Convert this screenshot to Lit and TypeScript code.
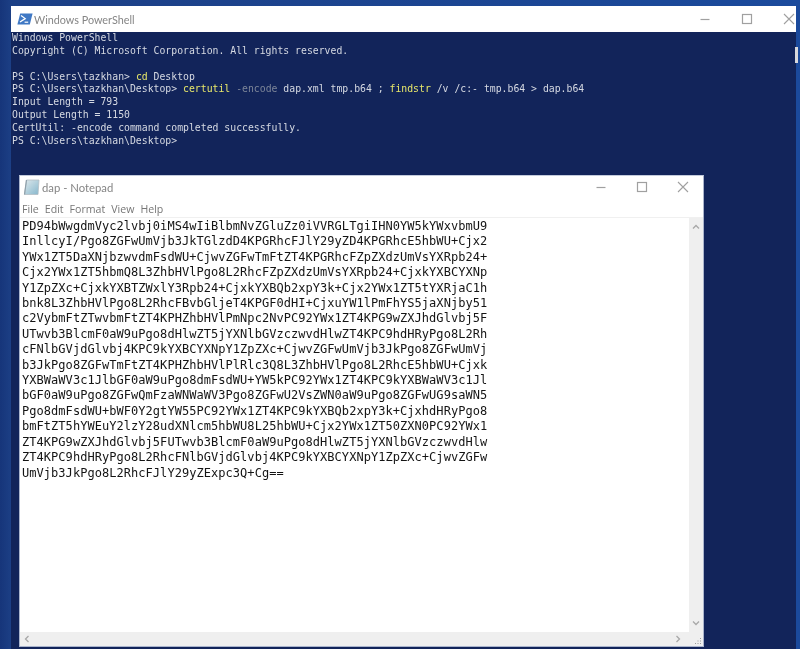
import { LitElement, html, css, svg } from "lit";
import { customElement } from "lit/decorators.js";

const CONSOLE: { text: string; parts?: [string, string][] }[] = [
  { text: "Windows PowerShell" },
  { text: "Copyright (C) Microsoft Corporation. All rights reserved." },
  { text: "" },
  { text: "", parts: [["", "PS C:\\Users\\tazkhan> "], ["y", "cd"], ["", " Desktop"]] },
  {
    text: "",
    parts: [
      ["", "PS C:\\Users\\tazkhan\\Desktop> "],
      ["y", "certutil"],
      ["", " "],
      ["g", "-encode"],
      ["", " dap.xml tmp.b64 ; "],
      ["y", "findstr"],
      ["", " /v /c:- tmp.b64 > dap.b64"],
    ],
  },
  { text: "Input Length = 793" },
  { text: "Output Length = 1150" },
  { text: "CertUtil: -encode command completed successfully." },
  { text: "PS C:\\Users\\tazkhan\\Desktop>" },
];

const B64 = [
  "PD94bWwgdmVyc2lvbj0iMS4wIiBlbmNvZGluZz0iVVRGLTgiIHN0YW5kYWxvbmU9",
  "InllcyI/Pgo8ZGFwUmVjb3JkTGlzdD4KPGRhcFJlY29yZD4KPGRhcE5hbWU+Cjx2",
  "YWx1ZT5DaXNjbzwvdmFsdWU+CjwvZGFwTmFtZT4KPGRhcFZpZXdzUmVsYXRpb24+",
  "Cjx2YWx1ZT5hbmQ8L3ZhbHVlPgo8L2RhcFZpZXdzUmVsYXRpb24+CjxkYXBCYXNp",
  "Y1ZpZXc+CjxkYXBTZWxlY3Rpb24+CjxkYXBQb2xpY3k+Cjx2YWx1ZT5tYXRjaC1h",
  "bnk8L3ZhbHVlPgo8L2RhcFBvbGljeT4KPGF0dHI+CjxuYW1lPmFhYS5jaXNjby51",
  "c2VybmFtZTwvbmFtZT4KPHZhbHVlPmNpc2NvPC92YWx1ZT4KPG9wZXJhdGlvbj5F",
  "UTwvb3BlcmF0aW9uPgo8dHlwZT5jYXNlbGVzczwvdHlwZT4KPC9hdHRyPgo8L2Rh",
  "cFNlbGVjdGlvbj4KPC9kYXBCYXNpY1ZpZXc+CjwvZGFwUmVjb3JkPgo8ZGFwUmVj",
  "b3JkPgo8ZGFwTmFtZT4KPHZhbHVlPlRlc3Q8L3ZhbHVlPgo8L2RhcE5hbWU+Cjxk",
  "YXBWaWV3c1JlbGF0aW9uPgo8dmFsdWU+YW5kPC92YWx1ZT4KPC9kYXBWaWV3c1Jl",
  "bGF0aW9uPgo8ZGFwQmFzaWNWaWV3Pgo8ZGFwU2VsZWN0aW9uPgo8ZGFwUG9saWN5",
  "Pgo8dmFsdWU+bWF0Y2gtYW55PC92YWx1ZT4KPC9kYXBQb2xpY3k+CjxhdHRyPgo8",
  "bmFtZT5hYWEuY2lzY28udXNlcm5hbWU8L25hbWU+Cjx2YWx1ZT50ZXN0PC92YWx1",
  "ZT4KPG9wZXJhdGlvbj5FUTwvb3BlcmF0aW9uPgo8dHlwZT5jYXNlbGVzczwvdHlw",
  "ZT4KPC9hdHRyPgo8L2RhcFNlbGVjdGlvbj4KPC9kYXBCYXNpY1ZpZXc+CjwvZGFw",
  "UmVjb3JkPgo8L2RhcFJlY29yZExpc3Q+Cg==",
];

const caption = () => html`
  <div class="caps">
    <svg width="14" height="14" viewBox="0 0 14 14"><path d="M2.500 7.500h9" stroke="#a0a0a0" stroke-width="1.200" fill="none" /></svg>
    <svg width="14" height="14" viewBox="0 0 14 14"><rect x="2.500" y="2.500" width="9" height="9" stroke="#a0a0a0" stroke-width="1.200" fill="none" /></svg>
    <svg width="14" height="14" viewBox="0 0 14 14"><path d="M2 2l10 10M12 2L2 12" stroke="#a0a0a0" stroke-width="1.100" fill="none" /></svg>
  </div>
`;

@customElement("app-root")
export class AppRoot extends LitElement {
  static styles = css`
    :host {
      display: block;
      width: 800px;
      height: 649px;
      overflow: hidden;
    }
    .desktop {
      position: relative;
      width: 800px;
      height: 649px;
      overflow: hidden;
      background: linear-gradient(90deg, #16357a 0, #1c3f85 11px, #1b4a9c 100%);
      filter: blur(0.45px);
    }
    .ps {
      position: absolute;
      left: 11px;
      top: 6px;
      width: 785px;
      height: 643px;
      display: flex;
      flex-direction: column;
      background: #12245a;
    }
    .title {
      display: flex;
      align-items: center;
      box-sizing: border-box;
      background: #fff;
      color: #858585;
      font-family: Lato, "Open Sans", sans-serif;
    }
    .ps .title {
      height: 26px;
      flex: none;
      padding-left: 6px;
      gap: 1px;
      font-size: 10.800px;
    }
    .caps {
      margin-left: auto;
      display: flex;
    }
    .ps .caps {
      gap: 28px;
      padding-right: 0;
    }
    .console {
      flex: 1;
      margin: 0;
      padding: 0 0 0 1px;
      color: #d5d9e2;
      font-family: "DejaVu Sans Mono", monospace;
      font-size: 9.800px;
      line-height: 12.850px;
      white-space: pre;
    }
    .y {
      color: #e8e86a;
    }
    .g {
      color: #7d8699;
    }
    .thumb {
      position: absolute;
      right: -2px;
      top: 41px;
      width: 3px;
      height: 16px;
      background: #d8d8dc;
    }
    .np {
      position: absolute;
      left: 19px;
      top: 175px;
      width: 685px;
      height: 472px;
      box-sizing: border-box;
      display: flex;
      flex-direction: column;
      background: #fff;
      border: 1px solid #aab4cc;
      border-top-color: #c3cbdc;
    }
    .np .title {
      height: 24px;
      flex: none;
      padding-left: 3px;
      padding-bottom: 2px;
      gap: 1px;
      font-size: 11.300px;
    }
    .np .caps {
      gap: 27px;
      padding-right: 13px;
    }
    .menu {
      display: flex;
      flex: none;
      height: 17px;
      align-items: center;
      padding-left: 2px;
      gap: 6px;
      color: #767676;
      font-family: "Open Sans", "Noto Sans", sans-serif;
      font-size: 10.600px;
      border-bottom: 1px solid #f0f0f0;
    }
    .mid {
      flex: 1;
      display: flex;
      min-height: 0;
    }
    .text {
      flex: 1;
      margin: 0;
      padding: 1px 0 0 2px;
      color: #141414;
      font-family: "DejaVu Sans Mono", monospace;
      font-size: 12px;
      letter-spacing: 0.045px;
      line-height: 15.400px;
      white-space: pre;
      overflow: hidden;
    }
    .vbar {
      width: 14px;
      flex: none;
      background: #efefef;
      display: flex;
      flex-direction: column;
      justify-content: space-between;
      align-items: center;
      padding: 5px 0;
      box-sizing: border-box;
    }
    .hbar {
      height: 14px;
      flex: none;
      background: #efefef;
      display: flex;
      align-items: center;
      justify-content: space-between;
      padding: 0 3px;
    }
    .hbar svg:nth-child(2) {
      margin-right: 18px;
    }
    .hbar .grip {
      position: absolute;
      right: 1px;
      bottom: 1px;
    }
  `;

  private chev(d: string) {
    return html`<svg width="8" height="8" viewBox="0 0 8 8"><path d=${d} stroke="#a8a8a8" stroke-width="1.300" fill="none" /></svg>`;
  }

  render() {
    return html`
      <div class="desktop">
        <section class="ps">
          <header class="title">
            <svg width="16" height="14" viewBox="0 0 16 14">
              <path d="M3.200 1.500H15.600L12.800 12.500H.4z" fill="#3f78c4" />
              <path d="M4 3.400l4.200 3.200L3 10" stroke="#fff" stroke-width="1.300" fill="none" />
              <path d="M7.600 10.200h3.600" stroke="#fff" stroke-width="1.200" fill="none" />
            </svg>
            <span>Windows PowerShell</span>
            ${caption()}
          </header>
          <pre class="console">${CONSOLE.map((l) =>
            l.parts
              ? html`<div>${l.parts.map(([c, t]) => html`<span class=${c}>${t}</span>`)}</div>`
              : html`<div>${l.text || " "}</div>`
          )}</pre>
          <div class="thumb"></div>
        </section>
        <section class="np">
          <header class="title">
            <svg width="18" height="17" viewBox="0 0 18 17">
              <defs>
                <linearGradient id="n" x1="0" y1="0" x2="1" y2="1">
                  <stop offset="0" stop-color="#dfe8ec" />
                  <stop offset=".6" stop-color="#a9cbd9" />
                  <stop offset="1" stop-color="#86b6cc" />
                </linearGradient>
              </defs>
              ${svg`<path d="M3.500 1h12.500l-1 14.500H1.500z" fill="url(#n)" stroke="#b4bec4" stroke-width=".8" />
              <path d="M3.500 1l-2 14.500" stroke="#8fa0aa" stroke-width="1.200" fill="none" />`}
            </svg>
            <span>dap - Notepad</span>
            ${caption()}
          </header>
          <nav class="menu">
            <span>File</span><span>Edit</span><span>Format</span><span>View</span><span>Help</span>
          </nav>
          <div class="mid">
            <pre class="text">${B64.join("\n")}</pre>
            <div class="vbar">${this.chev("M1 5.500l3-3 3 3")}${this.chev("M1 2.500l3 3 3-3")}</div>
          </div>
          <div class="hbar">
            ${this.chev("M5.500 1l-3 3 3 3")}${this.chev("M2.500 1l3 3-3 3")}
            <svg class="grip" width="8" height="8" viewBox="0 0 8 8">
              <path d="M6 1h1v1H6zM3.500 3.500h1v1h-1zM6 3.500h1v1H6zM1 6h1v1H1zM3.500 6h1v1h-1zM6 6h1v1H6z" fill="#9a9a9a" />
            </svg>
          </div>
        </section>
      </div>
    `;
  }
}
